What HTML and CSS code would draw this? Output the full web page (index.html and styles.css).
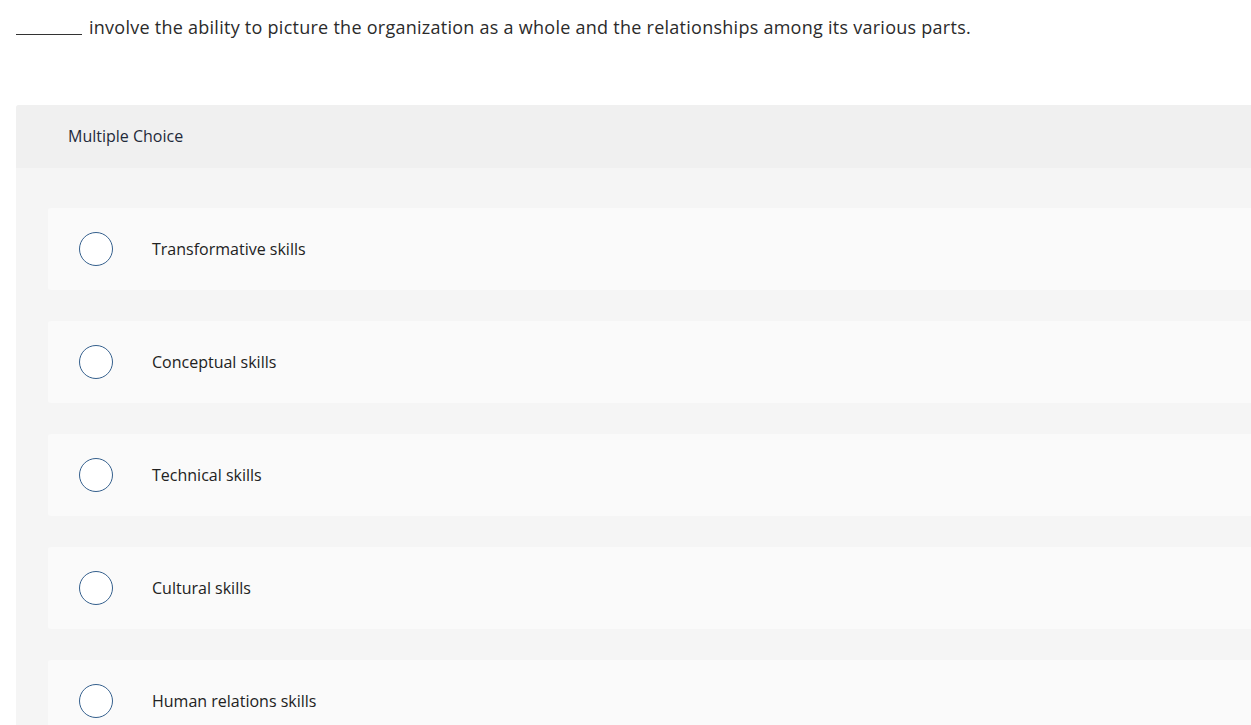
FILE: index.html
```html
<!DOCTYPE html>
<html lang="en">
<head>
<meta charset="utf-8">
<title>Multiple Choice</title>
<link rel="stylesheet" href="styles.css">
</head>
<body>
<div class="page">
  <p class="question"><span class="blank"></span> involve the ability to picture the organization as a whole and the relationships among its various parts.</p>
  <section class="panel">
    <header class="panel-head">Multiple Choice</header>
    <div class="options">
      <label class="option"><span class="radio"></span><span class="label">Transformative skills</span></label>
      <label class="option"><span class="radio"></span><span class="label">Conceptual skills</span></label>
      <label class="option"><span class="radio"></span><span class="label">Technical skills</span></label>
      <label class="option"><span class="radio"></span><span class="label">Cultural skills</span></label>
      <label class="option"><span class="radio"></span><span class="label">Human relations skills</span></label>
    </div>
  </section>
</div>
</body>
</html>
```

FILE: styles.css
```css
html, body {
  margin: 0;
  padding: 0;
  background: #ffffff;
  overflow: hidden;
}
body {
  font-family: "Open Sans", "Lato", sans-serif;
  color: #2a2a2a;
}
.page {
  padding: 0 0 0 16px;
}
.question {
  margin: 0;
  padding-top: 15px;
  font-size: 18px;
  letter-spacing: 0.26px;
  line-height: 24px;
  height: 25px;
  color: #2b2b2b;
  white-space: nowrap;
}
.blank {
  display: inline-block;
  width: 66px;
  margin-right: 2px;
  border-bottom: 1px solid #333;
  vertical-align: baseline;
  position: relative;
  top: 1px;
}
.panel {
  margin-top: 65px;
  background: #f5f5f5;
  border-radius: 3px 0 0 0;
}
.panel-head {
  background: #f0f0f0;
  height: 63px;
  display: flex;
  align-items: center;
  padding-left: 52px;
  padding-bottom: 1px;
  box-sizing: border-box;
  font-size: 16px;
  color: #1f2a3a;
  border-radius: 3px 0 0 0;
}
.options {
  padding: 40px 0 31px 32px;
  display: flex;
  flex-direction: column;
  gap: 31px;
}
.option {
  background: #fafafa;
  height: 82px;
  border-radius: 3px 0 0 3px;
  display: flex;
  align-items: center;
  padding-left: 31px;
}
.radio {
  width: 32px;
  height: 32px;
  border: 1.5px solid #35608d;
  border-radius: 50%;
  background: #ffffff;
  flex: none;
}
.label {
  margin-left: 39px;
  font-size: 16px;
  color: #222;
}
```
